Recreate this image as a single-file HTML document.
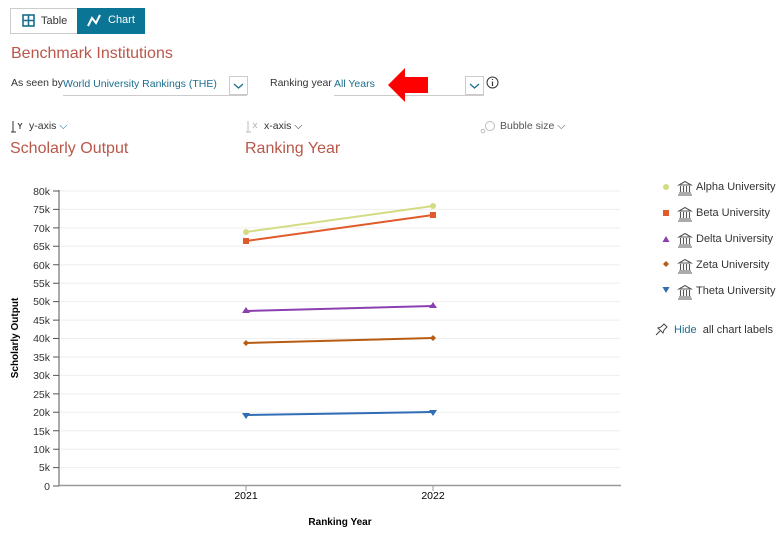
<!DOCTYPE html><html><head><meta charset="utf-8"><style>
body{margin:0;width:778px;height:540px;background:#fff;font-family:"Liberation Sans",sans-serif;position:relative;overflow:hidden;color:#333}
.a{position:absolute;white-space:nowrap}
.title{color:#b9574a;font-size:16px}
.blue{color:#1b6f8e}
</style></head><body>
<div class="a" style="left:10px;top:8px;width:66px;height:24px;border:1px solid #ccc;border-right:none;font-size:11px;line-height:24px">
<svg class="a" style="left:11px;top:5px" width="13" height="13" viewBox="0 0 13 13"><rect x="1" y="1" width="11" height="11" fill="none" stroke="#1b6f8e" stroke-width="1.6"/><path d="M6.5 1V12M1 6.5H12" stroke="#1b6f8e" stroke-width="1.6"/></svg><span class="a" style="left:30px;top:0">Table</span></div>
<div class="a" style="left:77px;top:8px;width:68px;height:26px;background:#0b7596;color:#fff;font-size:11px;line-height:25px">
<svg class="a" style="left:10px;top:6px" width="14" height="13" viewBox="0 0 14 13"><path d="M1 12L5 4L9 9L13 1" fill="none" stroke="#fff" stroke-width="2"/></svg><span class="a" style="left:31px;top:0">Chart</span></div>
<div class="a title" style="left:11px;top:45px">Benchmark Institutions</div>
<div class="a" style="left:11px;top:77px;font-size:10.5px">As seen by</div>
<div class="a blue" style="left:63px;top:78px;font-size:10.5px">World University Rankings (THE)</div>
<div class="a" style="left:63px;top:95px;width:184px;border-top:1px solid #ccc"></div>
<div class="a" style="left:229px;top:76px;width:17px;height:17px;border:1px solid #ccc"><svg width="17" height="17"><path d="M4 7L8.5 11L13 7" fill="none" stroke="#1b6f8e" stroke-width="1.3"/></svg></div>
<div class="a" style="left:270px;top:77px;font-size:10.5px">Ranking year</div>
<div class="a blue" style="left:334px;top:78px;font-size:10.5px">All Years</div>
<div class="a" style="left:334px;top:95px;width:150px;border-top:1px solid #ccc"></div>
<div class="a" style="left:465px;top:76px;width:17px;height:17px;border:1px solid #ccc"><svg width="17" height="17"><path d="M4 7L8.5 11L13 7" fill="none" stroke="#1b6f8e" stroke-width="1.3"/></svg></div>
<svg class="a" style="left:486px;top:76px" width="13" height="13"><circle cx="6.5" cy="6.5" r="5.5" fill="none" stroke="#333"/><path d="M6.5 5.5V10M6.5 3V4" stroke="#333" stroke-width="1.2"/></svg>
<svg class="a" style="left:388px;top:68px" width="42" height="34"><path d="M0 17L17 0V9H40V25H17V34Z" fill="#f00"/></svg>
<svg class="a" style="left:10px;top:120px" width="14" height="13"><path d="M3 1V12M1 12H6M8 3L10 6L12 3M10 6V9" fill="none" stroke="#333" stroke-width="1"/></svg>
<div class="a" style="left:29px;top:120px;font-size:10.5px">y-axis <span class="blue">⌵</span></div>
<svg class="a" style="left:245px;top:120px" width="14" height="13"><path d="M3 1V12M1 12H6M8 3L12 8M12 3L8 8" fill="none" stroke="#bbb" stroke-width="1"/></svg>
<div class="a" style="left:264px;top:120px;font-size:10.5px">x-axis ⌵</div>
<svg class="a" style="left:480px;top:120px" width="16" height="14"><circle cx="10" cy="6" r="4.5" fill="none" stroke="#bbb"/><circle cx="3" cy="11" r="1.8" fill="none" stroke="#bbb"/></svg>
<div class="a" style="left:500px;top:120px;font-size:10.5px;color:#555">Bubble size ⌵</div>
<div class="a title" style="left:10px;top:140px">Scholarly Output</div>
<div class="a title" style="left:245px;top:140px">Ranking Year</div>
<svg class="a" style="left:0;top:0" width="640" height="540" font-family="Liberation Sans,sans-serif" font-size="10.5">
<g stroke="#eee"><path d="M59 191H620M59 209.4H620M59 227.9H620M59 246.3H620M59 264.8H620M59 283.2H620M59 301.6H620M59 320.1H620M59 338.5H620M59 357H620M59 375.4H620M59 393.9H620M59 412.3H620M59 430.8H620M59 449.2H620M59 467.6H620"/></g>
<g stroke="#555"><path d="M59 190V486M53 191H59M53 209.4H59M53 227.9H59M53 246.3H59M53 264.8H59M53 283.2H59M53 301.6H59M53 320.1H59M53 338.5H59M53 357H59M53 375.4H59M53 393.9H59M53 412.3H59M53 430.8H59M53 449.2H59M53 467.6H59M53 486H59"/></g>
<path d="M59 485.5H621" stroke="#999" stroke-width="1.5"/>
<path d="M246 486V491M433 486V491" stroke="#999"/>
<g text-anchor="end" fill="#333"><text x="50" y="195">80k</text><text x="50" y="213">75k</text><text x="50" y="232">70k</text><text x="50" y="250">65k</text><text x="50" y="269">60k</text><text x="50" y="287">55k</text><text x="50" y="305">50k</text><text x="50" y="324">45k</text><text x="50" y="342">40k</text><text x="50" y="361">35k</text><text x="50" y="379">30k</text><text x="50" y="398">25k</text><text x="50" y="416">20k</text><text x="50" y="435">15k</text><text x="50" y="453">10k</text><text x="50" y="471">5k</text><text x="50" y="490">0</text></g>
<text x="246" y="499" text-anchor="middle">2021</text><text x="433" y="499" text-anchor="middle">2022</text>
<text x="340" y="525" text-anchor="middle" font-weight="bold" font-size="10">Ranking Year</text>
<text transform="translate(18 338) rotate(-90)" text-anchor="middle" font-weight="bold" font-size="10">Scholarly Output</text>
<path d="M246 232L433 206" stroke="#d3dc83" stroke-width="2"/><circle cx="246" cy="232" r="3" fill="#d3dc83"/><circle cx="433" cy="206" r="3" fill="#d3dc83"/>
<path d="M246 241L433 215" stroke="#e05a2b" stroke-width="2"/><rect x="243" y="238" width="6" height="6" fill="#e05a2b"/><rect x="430" y="212" width="6" height="6" fill="#e05a2b"/>
<path d="M246 311L433 306" stroke="#8b3fb0" stroke-width="2"/><path d="M246 307L250 313H242ZM433 302L437 308H429Z" fill="#8b3fb0"/>
<path d="M246 343L433 338" stroke="#b85c12" stroke-width="2"/><path d="M246 340L249 343L246 346L243 343ZM433 335L436 338L433 341L430 338Z" fill="#b85c12"/>
<path d="M246 415L433 412" stroke="#2f6db5" stroke-width="2"/><path d="M242 413H250L246 419ZM429 410H437L433 416Z" fill="#2f6db5"/>
</svg>
<svg class="a" style="left:660px;top:180px" width="34" height="120">
<circle cx="6" cy="7" r="3" fill="#d3dc83"/><rect x="3" y="30" width="6" height="6" fill="#e05a2b"/><path d="M6 56L9.5 62H2.5Z" fill="#8b3fb0"/><path d="M6 81L9 84L6 87L3 84Z" fill="#b85c12"/><path d="M2.5 107H9.5L6 113Z" fill="#2f6db5"/>
<g fill="none" stroke="#555" stroke-width="1.1">
<path d="M19 5L25 1.5L31 5ZM19 13H31M18 15H32M20.5 6V12M23.5 6V12M26.5 6V12M29.5 6V12"/>
<path transform="translate(0 26)" d="M19 5L25 1.5L31 5ZM19 13H31M18 15H32M20.5 6V12M23.5 6V12M26.5 6V12M29.5 6V12"/>
<path transform="translate(0 52)" d="M19 5L25 1.5L31 5ZM19 13H31M18 15H32M20.5 6V12M23.5 6V12M26.5 6V12M29.5 6V12"/>
<path transform="translate(0 78)" d="M19 5L25 1.5L31 5ZM19 13H31M18 15H32M20.5 6V12M23.5 6V12M26.5 6V12M29.5 6V12"/>
<path transform="translate(0 104)" d="M19 5L25 1.5L31 5ZM19 13H31M18 15H32M20.5 6V12M23.5 6V12M26.5 6V12M29.5 6V12"/>
</g></svg>
<div class="a" style="left:696px;top:174px;font-size:11px;line-height:26px">Alpha University<br>Beta University<br>Delta University<br>Zeta University<br>Theta University</div>
<svg class="a" style="left:655px;top:322px" width="14" height="14"><path d="M1 13L5 9M3 6L8 11L9 8L12 5L9 2L6 5Z" fill="none" stroke="#444" stroke-width="1"/></svg>
<div class="a" style="left:674px;top:324px;font-size:11px"><span class="blue">Hide</span>&nbsp; all chart labels</div>
</body></html>
